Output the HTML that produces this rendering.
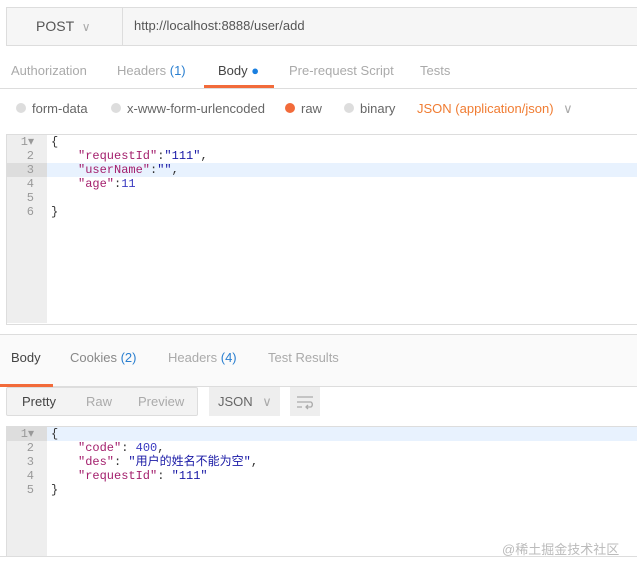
<!DOCTYPE html><html><head><style>
body{margin:0;width:637px;height:571px;background:#fff;font-family:"Liberation Sans",sans-serif;position:relative;overflow:hidden;font-size:13px;color:#808080}
.a{position:absolute}
.code{font-family:"Liberation Mono","Noto Sans CJK SC",monospace;font-size:12px;line-height:14px}
.k{color:#a31e6c}.s{color:#1a1aa6}.n{color:#3a3ac0}
.ln{position:absolute;left:6px;width:28px;text-align:right;color:#999}
</style></head><body>
<div class="a" style="left:6px;top:7px;width:640px;height:37px;background:#f6f6f6;border:1px solid #ddd"></div>
<div class="a" style="left:122px;top:8px;width:1px;height:37px;background:#ddd"></div>
<div class="a" style="left:36px;top:18px;font-size:14px;color:#555">POST <span style="color:#aaa;font-size:12px;margin-left:4px">&#8744;</span></div>
<div class="a" style="left:134px;top:18px;font-size:13px;color:#555">http://localhost:8888/user/add</div>
<div class="a" style="top:63px;left:11px;color:#aaa">Authorization</div>
<div class="a" style="top:63px;left:117px;color:#aaa">Headers <span style="color:#2a7fd0">(1)</span></div>
<div class="a" style="top:63px;left:218px;color:#444">Body <span style="color:#1a7fe0">●</span></div>
<div class="a" style="top:63px;left:289px;color:#aaa">Pre-request Script</div>
<div class="a" style="top:63px;left:420px;color:#aaa">Tests</div>
<div class="a" style="top:88px;left:0;width:637px;height:1px;background:#ddd"></div>
<div class="a" style="top:85px;left:204px;width:70px;height:3px;background:#f26b3a"></div>
<div class="a" style="top:101px;left:16px;color:#666">
<span style="display:inline-block;width:10px;height:10px;border-radius:50%;background:#ddd;margin-right:6px"></span>form-data</div>
<div class="a" style="top:101px;left:111px;color:#666"><span style="display:inline-block;width:10px;height:10px;border-radius:50%;background:#ddd;margin-right:6px"></span>x-www-form-urlencoded</div>
<div class="a" style="top:101px;left:285px;color:#666"><span style="display:inline-block;width:10px;height:10px;border-radius:50%;background:#f26b3a;margin-right:6px"></span>raw</div>
<div class="a" style="top:101px;left:344px;color:#666"><span style="display:inline-block;width:10px;height:10px;border-radius:50%;background:#ddd;margin-right:6px"></span>binary</div>
<div class="a" style="top:101px;left:417px;color:#f07c32">JSON (application/json) <span style="color:#aaa;margin-left:6px">&#8744;</span></div>
<div class="a" style="top:134px;left:6px;width:640px;height:189px;border:1px solid #ddd;border-right:0"></div>
<div class="a" style="top:135px;left:7px;width:40px;height:188px;background:#eee"></div>
<div class="a" style="top:163px;left:47px;width:590px;height:14px;background:#e8f2fe"></div>
<div class="a" style="top:163px;left:7px;width:40px;height:14px;background:#ddd"></div>
<div class="a code" style="top:135px;left:0;width:637px">
<div class="ln" style="top:0">1▾</div><div class="ln" style="top:14px">2</div><div class="ln" style="top:28px">3</div><div class="ln" style="top:42px">4</div><div class="ln" style="top:56px">5</div><div class="ln" style="top:70px">6</div>
<div class="a" style="left:51px;top:0;color:#333">{</div>
<div class="a" style="left:78px;top:14px"><span class="k">"requestId"</span><span style="color:#333">:</span><span class="s">"111"</span><span style="color:#333">,</span></div>
<div class="a" style="left:78px;top:28px"><span class="k">"userName"</span><span style="color:#333">:</span><span class="s">""</span><span style="color:#333">,</span></div>
<div class="a" style="left:78px;top:42px"><span class="k">"age"</span><span style="color:#333">:</span><span class="n">11</span></div>
<div class="a" style="left:51px;top:70px;color:#333">}</div>
</div>
<div class="a" style="top:334px;left:0;width:637px;height:1px;background:#ddd"></div>
<div class="a" style="top:335px;left:0;width:637px;height:52px;background:#fafafa"></div>
<div class="a" style="top:350px;left:11px;color:#444">Body</div>
<div class="a" style="top:350px;left:70px;color:#888">Cookies <span style="color:#2a7fd0">(2)</span></div>
<div class="a" style="top:350px;left:168px;color:#aaa">Headers <span style="color:#2a7fd0">(4)</span></div>
<div class="a" style="top:350px;left:268px;color:#aaa">Test Results</div>
<div class="a" style="top:386px;left:0;width:637px;height:1px;background:#ddd"></div>
<div class="a" style="top:384px;left:0;width:53px;height:3px;background:#f26b3a"></div>
<div class="a" style="top:387px;left:6px;width:190px;height:27px;background:#f3f3f3;border:1px solid #ddd;border-radius:2px"></div>
<div class="a" style="top:394px;left:22px;color:#444">Pretty</div>
<div class="a" style="top:394px;left:86px;color:#aaa">Raw</div>
<div class="a" style="top:394px;left:138px;color:#aaa">Preview</div>
<div class="a" style="top:387px;left:209px;width:71px;height:29px;background:#eee"></div>
<div class="a" style="top:394px;left:218px;color:#666">JSON <span style="color:#aaa;margin-left:6px">&#8744;</span></div>
<div class="a" style="top:387px;left:290px;width:30px;height:29px;background:#eee"></div>
<svg class="a" style="top:394px;left:295px" width="20" height="16"><path d="M2 3h16M2 8h14a3 3 0 0 1 0 5h-4M2 13h5M13 11l-2 2 2 2" stroke="#aaa" stroke-width="1.3" fill="none"/></svg>
<div class="a" style="top:426px;left:6px;width:640px;height:130px;border-top:1px solid #ddd;border-left:1px solid #ddd"></div>
<div class="a" style="top:427px;left:7px;width:40px;height:129px;background:#eee"></div>
<div class="a" style="top:427px;left:47px;width:590px;height:14px;background:#e8f2fe"></div>
<div class="a" style="top:427px;left:7px;width:40px;height:14px;background:#ddd"></div>
<div class="a" style="top:556px;left:0;width:637px;height:1px;background:#ddd"></div>
<div class="a code" style="top:427px;left:0;width:637px">
<div class="ln" style="top:0">1▾</div><div class="ln" style="top:14px">2</div><div class="ln" style="top:28px">3</div><div class="ln" style="top:42px">4</div><div class="ln" style="top:56px">5</div>
<div class="a" style="left:51px;top:0;color:#333">{</div>
<div class="a" style="left:78px;top:14px"><span class="k">"code"</span><span style="color:#333">: </span><span class="n">400</span><span style="color:#333">,</span></div>
<div class="a" style="left:78px;top:28px"><span class="k">"des"</span><span style="color:#333">: </span><span class="s">"用户的姓名不能为空"</span><span style="color:#333">,</span></div>
<div class="a" style="left:78px;top:42px"><span class="k">"requestId"</span><span style="color:#333">: </span><span class="s">"111"</span></div>
<div class="a" style="left:51px;top:56px;color:#333">}</div>
</div>
<div class="a" style="top:539px;left:502px;font-size:13px;color:#bbb;font-family:'Liberation Sans','Noto Sans CJK SC',sans-serif">@稀土掘金技术社区</div>
</body></html>
